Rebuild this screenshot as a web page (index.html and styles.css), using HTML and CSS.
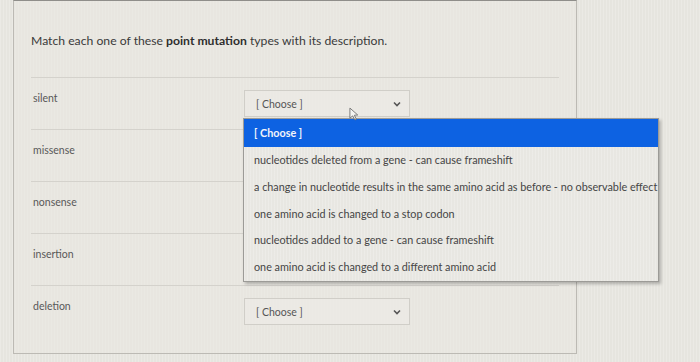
FILE: index.html
```html
<!DOCTYPE html>
<html>
<head>
    <title>Matching question</title>
    <link rel="stylesheet" href="styles.css">
</head>
<body>
    <div class="card">
        <p class="prompt">Match each one of these <strong>point mutation</strong> types with its description.</p>

        <div class="row">
            <div class="label">silent</div>
            <div class="select open">
                <span>[ Choose ]</span>
                <svg class="chev" viewBox="0 0 8 6" width="8" height="6"><path d="M1 1.5 L4 4.5 L7 1.5" fill="none" stroke="#555" stroke-width="1.6"/></svg>
                <ul class="menu">
                    <li class="active">[ Choose ]</li>
                    <li>nucleotides deleted from a gene - can cause frameshift</li>
                    <li>a change in nucleotide results in the same amino acid as before - no observable effect</li>
                    <li>one amino acid is changed to a stop codon</li>
                    <li>nucleotides added to a gene - can cause frameshift</li>
                    <li>one amino acid is changed to a different amino acid</li>
                </ul>
                <svg class="cursor" viewBox="0 0 12 16" width="11" height="15"><path d="M1 1 L1 12 L4 9.5 L6.5 14 L8 13.2 L5.8 8.8 L9.5 8.5 Z" fill="#f4f4f2" stroke="#666" stroke-width="0.9"/></svg>
            </div>
        </div>

        <div class="row">
            <div class="label">missense</div>
        </div>

        <div class="row">
            <div class="label">nonsense</div>
        </div>

        <div class="row">
            <div class="label">insertion</div>
        </div>

        <div class="row">
            <div class="label">deletion</div>
            <div class="select">
                <span>[ Choose ]</span>
                <svg class="chev" viewBox="0 0 8 6" width="8" height="6"><path d="M1 1.5 L4 4.5 L7 1.5" fill="none" stroke="#555" stroke-width="1.6"/></svg>
            </div>
        </div>
    </div>
</body>
</html>
```

FILE: styles.css
```css
body {
    margin: 0;
    background: #e6e5df;
    background-image: repeating-linear-gradient(90deg, rgba(255,255,255,0.2) 0 1px, transparent 1px 3px);
    font-family: Lato, "Open Sans", sans-serif;
    color: #3c3c3c;
    height: 362px;
    overflow: hidden;
}

.card {
    margin-left: 13px;
    width: 528px;
    height: 341px;
    padding: 11px 17px 0 17px;
    border: 1px solid #bcbab4;
    border-top-color: #8f8e8a;
    background: rgba(233,231,226,0.5);
}

.prompt {
    margin: 21px 0 0 0;
    font-size: 12.2px;
    line-height: 16px;
    color: #3a3a3a;
}
.prompt strong { font-weight: 700; color: #2e2e2e; }

.row {
    display: grid;
    grid-template-columns: 211px 166px;
    height: 51px;
    padding-left: 2px;
    border-top: 1px solid #d4d2cc;
}
.prompt + .row { margin-top: 28px; }

.label {
    padding-top: 13px;
    font-size: 10.5px;
    line-height: 14px;
    color: #585858;
}

.select {
    position: relative;
    margin-top: 12px;
    height: 25px;
    border: 1px solid #d0cec8;
    background: rgba(238,236,232,0.5);
    display: flex;
    align-items: center;
    justify-content: space-between;
    padding: 0 8px 0 11px;
    font-size: 10.5px;
    color: #555;
}

.menu {
    position: absolute;
    left: -2px;
    top: 27px;
    width: 414px;
    margin: 0;
    padding: 0;
    list-style: none;
    background: #e8e7e2;
    background-image: repeating-linear-gradient(90deg, rgba(255,255,255,0.2) 0 1px, transparent 1px 3px);
    border: 1px solid #9c9b97;
    box-shadow: 2px 2px 3px rgba(0,0,0,0.25);
    z-index: 2;
}
.menu li {
    height: 26.8px;
    line-height: 26.8px;
    padding-left: 10px;
    font-size: 10.8px;
    color: #454545;
    white-space: nowrap;
}
.menu li.active {
    height: 28px;
    line-height: 28px;
    background: #0d62e2;
    color: #f2f4fa;
    font-weight: 700;
}

.cursor {
    position: absolute;
    left: 104px;
    top: 16px;
    z-index: 3;
}
```
